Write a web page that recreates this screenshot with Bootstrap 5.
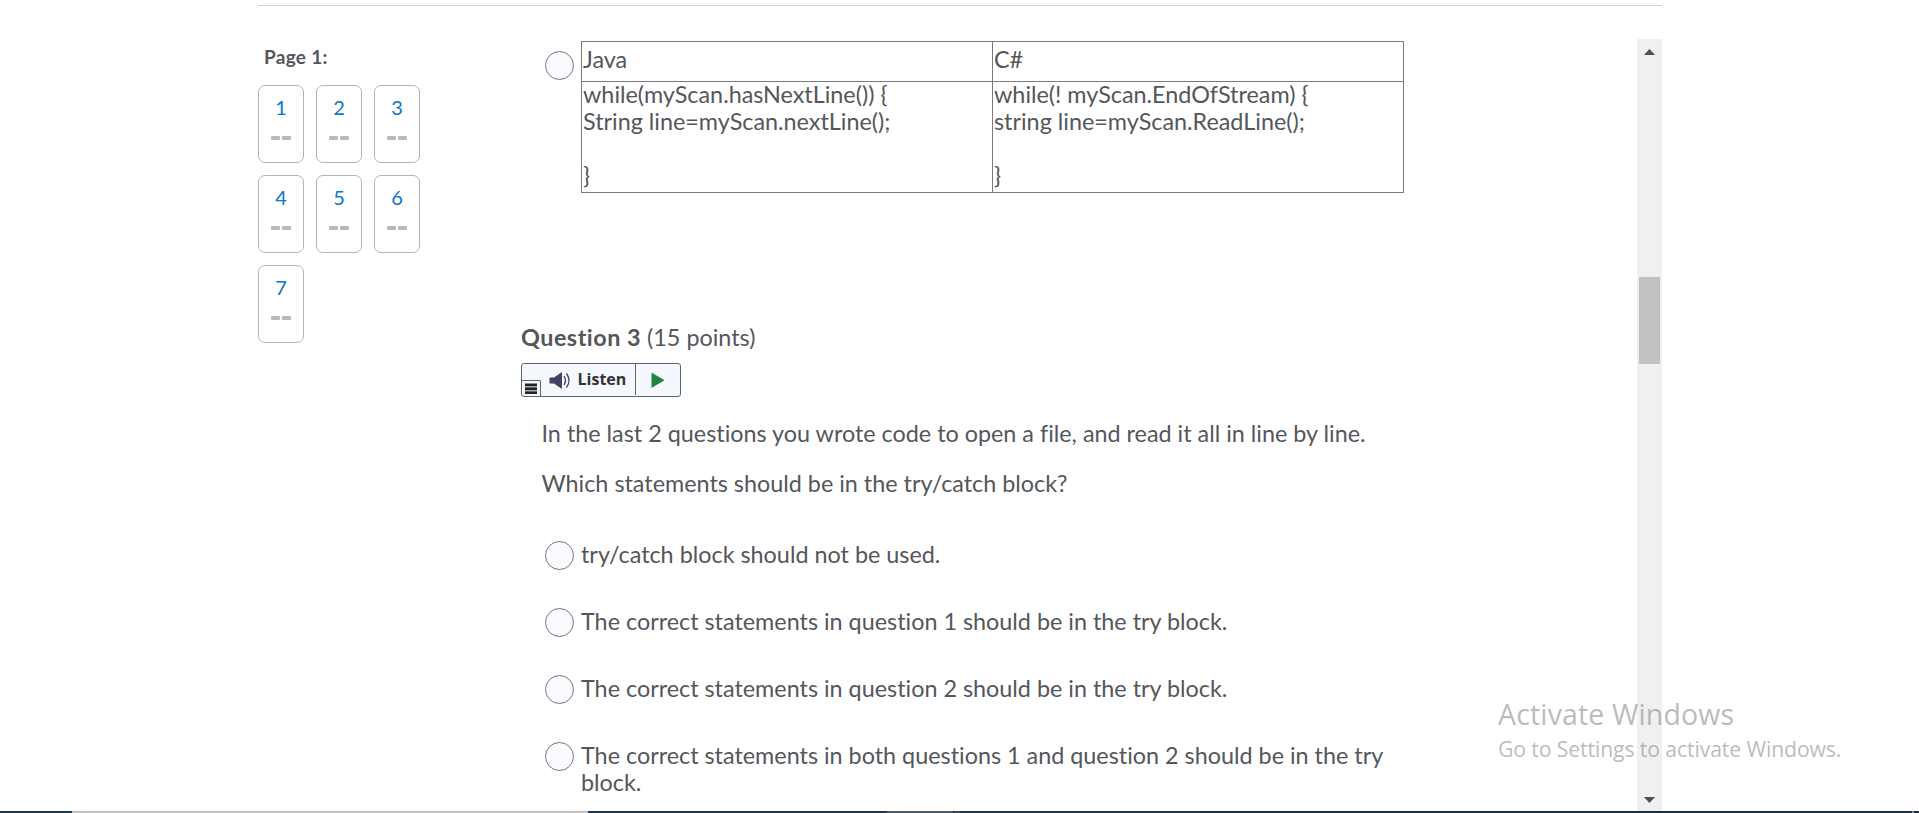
<!DOCTYPE html>
<html lang="en">
<head>
<meta charset="utf-8">
<meta name="viewport" content="width=device-width, initial-scale=1">
<title>Quiz</title>
<link href="https://cdn.jsdelivr.net/npm/bootstrap@5.3.0/dist/css/bootstrap.min.css" rel="stylesheet">
<style>
body{font-family:Lato,sans-serif;color:#54575a;font-size:23.36px;line-height:27px;height:813px;overflow:hidden;background:#fff;font-variant-ligatures:none}
.shell{width:1404px;margin:5px 0 0 258px;height:807px;border-top:1px solid #cdd5dc}
.side{width:161px;padding-top:38px}
.side h2{font-size:19px;line-height:26px;font-weight:700;margin:0 0 15px 6px;letter-spacing:.3px}
.qgrid{display:grid;grid-template-columns:repeat(3,46px);gap:12px}
.qbtn{height:78px;border:1px solid #b0b6bd;border-radius:7px;color:#0a76c4;text-decoration:none;font-size:20px;line-height:24px;padding-top:9px}
.dash{display:flex;gap:2px;margin-top:17px}
.dash i{width:9px;height:4px;border-radius:1px;background:#b3bac0}
.main{margin-left:102px;width:884px}
.opt{padding-left:24px;gap:7px}
.opt .ring{width:29px;height:29px;flex:none;border:1px solid #72777a;border-radius:50%;background:#f9fbff}
.opt-table{padding-top:35px;height:317px}
.opt-table .ring{margin-top:10px}
.choice{height:67px}
.code{width:823px;border-collapse:collapse;table-layout:fixed}
.code td{border:1px solid #7a7a7a;padding:0 1px;vertical-align:top}
.code .head td{height:40px;padding-top:4px}
.code .body td{height:111px}
.code .body div{margin-top:-1px}
.qtitle{font-size:23.37px;line-height:30px;font-weight:400;margin:-1px 0 11px}
.qtitle b{letter-spacing:.5px}
.listen{width:160px;height:34px;border:1px solid #5b6670;border-radius:3px;background:#f5f9fd;font:700 16px/32px "Open Sans",sans-serif}
.ask{margin:23px 0 23px 20.500px}
.ask + .ask{margin-bottom:44px}
.rail{width:25px;height:772px;margin-top:33px;background:#f0f0f0;padding:10px 2px 8px}
.thumb{width:21px;height:87px;background:#c1c1c1;margin-top:222px}
.mark-os{position:absolute;left:1498px;top:694px;font-family:"Open Sans",sans-serif;color:rgba(120,120,120,.5);white-space:nowrap}
.mark-os .big{font-size:28.5px;line-height:40px;letter-spacing:.15px}
.mark-os .sub{font-size:21.2px;line-height:30px;letter-spacing:-.11px}
.strip{height:2px;position:absolute;left:0;right:0;bottom:0}
</style>
</head>
<body>
<div class="shell d-flex">
  <nav class="side">
    <h2>Page 1:</h2>
    <div class="qgrid">
      <a class="qbtn d-flex flex-column align-items-center" href="#">1<span class="dash"><i></i><i></i></span></a>
      <a class="qbtn d-flex flex-column align-items-center" href="#">2<span class="dash"><i></i><i></i></span></a>
      <a class="qbtn d-flex flex-column align-items-center" href="#">3<span class="dash"><i></i><i></i></span></a>
      <a class="qbtn d-flex flex-column align-items-center" href="#">4<span class="dash"><i></i><i></i></span></a>
      <a class="qbtn d-flex flex-column align-items-center" href="#">5<span class="dash"><i></i><i></i></span></a>
      <a class="qbtn d-flex flex-column align-items-center" href="#">6<span class="dash"><i></i><i></i></span></a>
      <a class="qbtn d-flex flex-column align-items-center" href="#">7<span class="dash"><i></i><i></i></span></a>
    </div>
  </nav>
  <main class="main">
    <div class="opt opt-table d-flex">
      <span class="ring"></span>
      <div>
        <table class="code">
          <tr class="head"><td>Java</td><td>C#</td></tr>
          <tr class="body"><td><div>while(myScan.hasNextLine()) {<br>String line=myScan.nextLine();<br><br>}</div></td><td><div>while(! myScan.EndOfStream) {<br>string line=myScan.ReadLine();<br><br>}</div></td></tr>
        </table>
      </div>
    </div>
    <h3 class="qtitle"><b>Question 3</b> (15 points)</h3>
    <div class="listen d-flex">
      <svg width="113" height="32" viewBox="522 364 113 32"><path d="M522 380.500h18.500V396" fill="none" stroke="#5b6670"/><path d="M525 384h12v9h-12z" fill="#a5a8ab"/><path d="M525 383.500h12v2.500h-12zM525 387.500h12v2.500h-12zM525 391.500h12v2.500h-12z" fill="#222"/><path d="M549.500 377.500h4.500l8-5.500v17l-8-5.500h-4.500z" fill="#453f63"/><path d="M564 376q3 4.500 0 9M566.500 373.500q5 7 0 14" fill="none" stroke="#453f63" stroke-width="1.300"/><text x="577.500" y="385" fill="#333">Listen</text></svg>
      <svg width="45" height="32" viewBox="635 364 45 32"><path d="M635.500 364v31" stroke="#5b6670"/><path d="M651.500 372.500v15.500l13-7.700z" fill="#1f8540"/></svg>
    </div>
    <p class="ask">In the last 2 questions you wrote code to open a file, and read it all in line by line.</p>
    <p class="ask">Which statements should be in the try/catch block?</p>
    <div class="opt choice d-flex"><span class="ring"></span><span>try/catch block should not be used.</span></div>
    <div class="opt choice d-flex"><span class="ring"></span><span>The correct statements in question 1 should be in the try block.</span></div>
    <div class="opt choice d-flex"><span class="ring"></span><span>The correct statements in question 2 should be in the try block.</span></div>
    <div class="opt d-flex"><span class="ring"></span><span>The correct statements in both questions 1 and question 2 should be in the try block.</span></div>
  </main>
  <div class="rail ms-auto d-flex flex-column align-items-center">
    <svg width="11" height="6"><path d="M0 6L5.500 0 11 6z" fill="#505050"/></svg>
    <div class="thumb"></div>
    <svg class="mt-auto" width="11" height="6"><path d="M0 0h11L5.500 6z" fill="#505050"/></svg>
  </div>
</div>
<div class="mark-os"><div class="big">Activate Windows</div><div class="sub">Go to Settings to activate Windows.</div></div>
<svg class="strip" width="1919" height="2"><path d="M0 0h1200v2H0z" fill="#22384a"/><path d="M1200 0h719v2h-719z" fill="#1c2d46"/><path d="M72 0h516v2H72z" fill="#c0c0c0"/><path d="M887 0h66v2h-66z" fill="#4d5c68"/><path d="M955 0h5v2h-5z" fill="#3d4c5a"/><path d="M1912 0h2v2h-2z" fill="#7f8790"/></svg>
<script src="https://cdn.jsdelivr.net/npm/bootstrap@5.3.0/dist/js/bootstrap.bundle.min.js"></script>
</body>
</html>
